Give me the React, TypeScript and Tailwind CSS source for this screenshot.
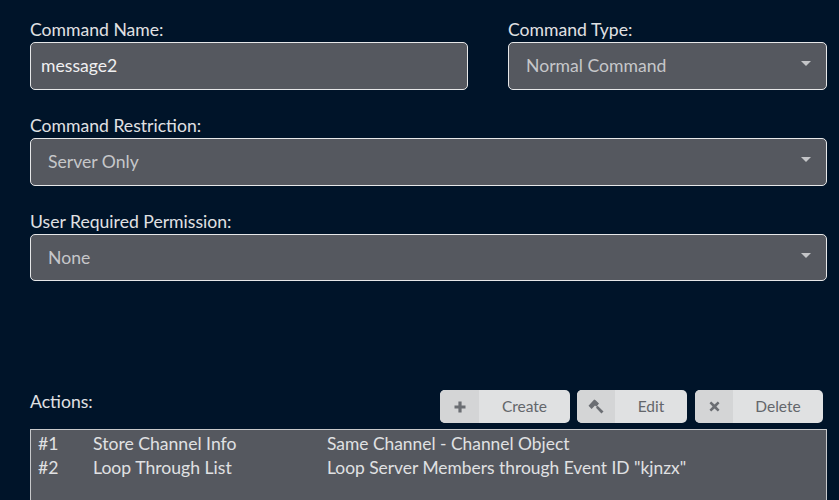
function Caret() {
  return <span className="absolute right-[15px] top-[18px] w-0 h-0 border-x-[5px] border-x-transparent border-t-[5px] border-t-[#c4c5c8]" />;
}

function Dropdown({ value, height = "h-[48px]" }: { value: string; height?: string }) {
  return (
    <div className={`relative ${height} flex items-center pl-[17px] bg-[#55585f] border border-[#e6e7e8] rounded-[5px] text-[#c6c7ca]`}>
      {value}
      <Caret />
    </div>
  );
}

function PlusIcon() {
  return (
    <svg width="12" height="12" viewBox="0 0 12 12" fill="#6b6e73">
      <path d="M4.4 0.5 H7.6 V4.4 H11.5 V7.6 H7.6 V11.5 H4.4 V7.6 H0.5 V4.4 H4.4 Z" />
    </svg>
  );
}

function CrossIcon() {
  return (
    <svg width="11" height="11" viewBox="0 0 11 11" fill="#6b6e73">
      <path d="M2.2 0.5 L5.5 3.6 L8.8 0.5 L10.5 2.2 L7.4 5.5 L10.5 8.8 L8.8 10.5 L5.5 7.4 L2.2 10.5 L0.5 8.8 L3.6 5.5 L0.5 2.2 Z" />
    </svg>
  );
}

function Hammer() {
  return (
    <svg width="16" height="15" viewBox="0 0 16 15" fill="#6b6e73">
      <path d="M0.5 6.8 L6.2 0.5 L7.6 1.2 L11 4.6 L8.4 7.8 L7 6.6 L3.6 10 Z" />
      <path d="M8 8.8 L9.6 6.8 L15.5 12.4 L13.4 14.5 Z" />
    </svg>
  );
}

function ActionButton({ label, icon, width, iconWidth }: { label: string; icon: React.ReactNode; width: string; iconWidth: string }) {
  return (
    <div className={`flex h-[33px] ${width} rounded-[5px] overflow-hidden bg-[#e0e1e2] text-[#63666b] text-[15.5px]`}>
      <div className={`flex items-center justify-center ${iconWidth} bg-[#d4d5d6]`}>{icon}</div>
      <div className="flex-1 flex items-center justify-center pb-[1px]">{label}</div>
    </div>
  );
}

const actions = [
  { id: "#1", name: "Store Channel Info", info: "Same Channel - Channel Object" },
  { id: "#2", name: "Loop Through List", info: 'Loop Server Members through Event ID "kjnzx"' },
];

export default function App() {
  return (
    <div className="h-[500px] w-[839px] overflow-hidden bg-[#001429] text-[#e0e1e3] text-[17.6px] leading-[24px] font-['Lato',sans-serif] pl-[30px] pr-[12px] pt-[18px]">
      <div className="flex gap-[40px]">
        <div className="w-[438px]">
          <div className="h-[24px]">Command Name:</div>
          <div className="h-[48px] flex items-center pl-[10px] bg-[#55585f] border border-[#e6e7e8] rounded-[5px] text-[#f0f0f1]">message2</div>
        </div>
        <div className="flex-1">
          <div className="h-[24px]">Command Type:</div>
          <Dropdown value="Normal Command" />
        </div>
      </div>

      <div className="mt-[24px] h-[24px]">Command Restriction:</div>
      <Dropdown value="Server Only" />

      <div className="mt-[24px] h-[24px]">User Required Permission:</div>
      <Dropdown value="None" height="h-[47px]" />

      <div className="mt-[109px] flex items-start justify-between pr-[4px]">
        <div>Actions:</div>
        <div className="flex gap-[7px]">
          <ActionButton label="Create" width="w-[130px]" iconWidth="w-[39px]" icon={<PlusIcon />} />
          <ActionButton label="Edit" width="w-[110px]" iconWidth="w-[38px]" icon={<Hammer />} />
          <div className="ml-[1px]">
            <ActionButton label="Delete" width="w-[128px]" iconWidth="w-[38px]" icon={<CrossIcon />} />
          </div>
        </div>
      </div>

      <div className="mt-[6px] h-[80px] bg-[#55585f] border border-[#c8c9cb] pt-[2px] pl-[7px]">
        {actions.map((a) => (
          <div key={a.id} className="flex h-[24px] items-center">
            <div className="w-[55px]">{a.id}</div>
            <div className="w-[234px]">{a.name}</div>
            <div className="text-[17.4px]">{a.info}</div>
          </div>
        ))}
      </div>
    </div>
  );
}
